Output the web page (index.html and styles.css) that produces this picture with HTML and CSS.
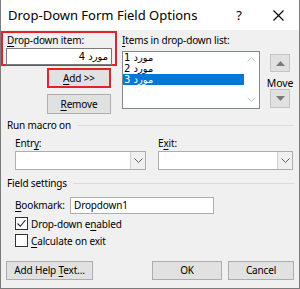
FILE: index.html
```html
<!DOCTYPE html>
<html lang="en">
<head>
    <meta charset="UTF-8">
    <title>Drop-Down Form Field Options</title>
    <link rel="stylesheet" href="styles.css">
</head>
<body>
    <div class="dialog">
        <div class="titlebar">
            <span class="title">Drop-Down Form Field Options</span>
            <span class="help">?</span>
            <span class="close">
                <svg width="11" height="11" viewBox="0 0 11 11"><path d="M0.5 0.5 L10.5 10.5 M10.5 0.5 L0.5 10.5" stroke="#000" stroke-width="1.1" fill="none"/></svg>
            </span>
        </div>

        <div class="content">
            <div class="top">
                <div class="col-item">
                    <div class="item-box">
                        <div class="label"><u>D</u>rop-down item:</div>
                        <div class="textbox item-input"><span class="arabic" dir="rtl">مورد 4</span></div>
                    </div>
                    <button class="btn btn-side marked"><u>A</u>dd &gt;&gt;</button>
                    <button class="btn btn-side btn-remove"><u>R</u>emove</button>
                </div>

                <div class="col-list">
                    <div class="label"><u>I</u>tems in drop-down list:</div>
                    <div class="listbox">
                        <div class="list-rows">
                            <div class="list-row"><span class="arabic" dir="rtl">مورد 1</span></div>
                            <div class="list-row"><span class="arabic" dir="rtl">مورد 2</span></div>
                            <div class="list-row selected"><span class="arabic" dir="rtl">مورد 3</span></div>
                        </div>
                        <div class="scrollbar">
                            <svg width="9" height="5" viewBox="0 0 9 5"><path d="M0.5 4.5 L4.5 0.5 L8.5 4.5" stroke="#c4c4c4" fill="none"/></svg>
                            <svg width="9" height="5" viewBox="0 0 9 5"><path d="M0.5 0.5 L4.5 4.5 L8.5 0.5" stroke="#c4c4c4" fill="none"/></svg>
                        </div>
                    </div>
                </div>

                <div class="col-move">
                    <div class="move-btn">
                        <svg width="9" height="5" viewBox="0 0 9 5"><path d="M0 5 L4.5 0 L9 5 Z" fill="#7a7a7a"/></svg>
                    </div>
                    <div class="move-label">Move</div>
                    <div class="move-btn move-down">
                        <svg width="9" height="5" viewBox="0 0 9 5"><path d="M0 0 L4.5 5 L9 0 Z" fill="#7a7a7a"/></svg>
                    </div>
                </div>
            </div>

            <div class="group-head">
                <span>Run macro on</span>
                <span class="rule"></span>
            </div>
            <div class="macro-row">
                <div class="macro-col">
                    <div class="label">Entr<u>y</u>:</div>
                    <div class="combo">
                        <span class="combo-text"></span>
                        <span class="combo-btn">
                            <svg width="9" height="5" viewBox="0 0 9 5"><path d="M0.5 0.5 L4.5 4.5 L8.5 0.5" stroke="#606060" fill="none"/></svg>
                        </span>
                    </div>
                </div>
                <div class="macro-col">
                    <div class="label">E<u>x</u>it:</div>
                    <div class="combo">
                        <span class="combo-text"></span>
                        <span class="combo-btn">
                            <svg width="9" height="5" viewBox="0 0 9 5"><path d="M0.5 0.5 L4.5 4.5 L8.5 0.5" stroke="#606060" fill="none"/></svg>
                        </span>
                    </div>
                </div>
            </div>

            <div class="group-head group-fields">
                <span>Field settings</span>
                <span class="rule"></span>
            </div>
            <div class="bookmark-row">
                <span class="bookmark-label"><u>B</u>ookmark:</span>
                <div class="textbox bookmark-input">Dropdown1</div>
            </div>
            <div class="check-row">
                <span class="checkbox">
                    <svg width="11" height="11" viewBox="0 0 11 11"><path d="M1.5 5.5 L4.3 8.3 L9.5 2" stroke="#222" stroke-width="1.1" fill="none"/></svg>
                </span>
                <span>Drop-down e<u>n</u>abled</span>
            </div>
            <div class="check-row check-second">
                <span class="checkbox"></span>
                <span><u>C</u>alculate on exit</span>
            </div>

            <div class="footer">
                <button class="btn btn-help">Add Help <u>T</u>ext...</button>
                <span class="spacer"></span>
                <button class="btn btn-ok">OK</button>
                <button class="btn btn-cancel">Cancel</button>
            </div>
        </div>
    </div>
</body>
</html>
```

FILE: styles.css
```css
* {
    box-sizing: border-box;
}
body {
    margin: 0;
    font-family: "Noto Sans", "DejaVu Sans", sans-serif;
    font-size: 10px;
    letter-spacing: -0.15px;
    color: #000;
    background: #fff;
}
u {
    text-decoration-thickness: 1px;
    text-underline-offset: 2px;
}
.arabic {
    font-family: "DejaVu Sans", sans-serif;
    font-size: 10px;
    letter-spacing: 0;
}
.dialog {
    width: 300px;
    height: 289px;
    border: 1px solid #7a7a7a;
    border-top: none;
    background: #f0f0f0;
    display: flex;
    flex-direction: column;
}
.titlebar {
    height: 30px;
    flex-shrink: 0;
    background: #fff;
    display: flex;
    align-items: center;
    padding-left: 7px;
    letter-spacing: 0;
}
.title {
    flex: 1;
    font-size: 13px;
}
.help {
    width: 20px;
    text-align: center;
    font-size: 13px;
    margin-right: 9px;
}
.close {
    width: 41px;
    display: flex;
    justify-content: center;
}
.content {
    flex: 1;
    display: flex;
    flex-direction: column;
    padding: 0 5px 8px 6px;
}
.label {
    height: 14px;
    line-height: 14px;
    white-space: nowrap;
}

/* top part: item box, list, move buttons */
.top {
    display: flex;
    margin-left: -6px;
    margin-top: 1px;
}
.col-item {
    width: 116px;
    display: flex;
    flex-direction: column;
}
.item-box {
    border: 2px solid #e5222b;
    padding: 0 3px 0 4px;
    height: 35px;
}
.textbox {
    background: #fff;
    border: 1px solid #7a7a7a;
    height: 17px;
    line-height: 15px;
    padding: 0 3px;
    white-space: nowrap;
}
.item-input {
    margin: 1px 0 0 -1px;
    text-align: right;
}
.btn {
    font-family: inherit;
    font-size: inherit;
    letter-spacing: inherit;
    color: #000;
    background: #e1e1e1;
    border: 1px solid #adadad;
    padding: 0;
    height: 20px;
    line-height: 18px;
}
.btn-side {
    width: 64px;
    margin-left: 46px;
    margin-top: 2px;
}
.btn-remove {
    margin-top: 6px;
}
.marked {
    border: 2px solid #e5222b;
    line-height: 16px;
}

.col-list {
    width: 138px;
    margin-left: 5px;
    padding-top: 2px;
}
.listbox {
    margin-top: 4px;
    height: 58px;
    background: #fff;
    border: 1px solid #828790;
    display: flex;
}
.list-rows {
    flex: 1;
}
.list-row {
    height: 11px;
    line-height: 11px;
    padding-left: 1px;
    overflow: hidden;
}
.list-row.selected {
    background: #0078d7;
    color: #fff;
}
.scrollbar {
    width: 15px;
    display: flex;
    flex-direction: column;
    justify-content: space-between;
    align-items: center;
    padding: 5px 0 6px;
}

.col-move {
    width: 26px;
    margin-left: 7px;
    display: flex;
    flex-direction: column;
    align-items: center;
    padding-top: 23px;
}
.move-btn {
    width: 20px;
    height: 18px;
    background: #e1e1e1;
    border: 1px solid #c4c4c4;
    display: flex;
    align-items: center;
    justify-content: center;
}
.move-label {
    margin-top: 4px;
    line-height: 14px;
    font-size: 10.5px;
}
.move-down {
    margin-top: -1px;
    height: 19px;
}

/* groups */
.group-head {
    display: flex;
    align-items: center;
    height: 14px;
    margin-top: 4px;
}
.group-head .rule {
    flex: 1;
    height: 1px;
    background: #dcdcdc;
    margin-left: 6px;
}
.macro-row {
    display: grid;
    grid-template-columns: 131px 135px;
    gap: 12px;
    padding-left: 8px;
    margin-top: 4px;
}
.combo {
    margin-top: 1px;
    height: 19px;
    background: #fff;
    border: 1px solid #adadad;
    display: flex;
}
.combo-text {
    flex: 1;
}
.combo-btn {
    width: 15px;
    background: #f0f0f0;
    border-left: 1px solid #d0d0d0;
    display: flex;
    align-items: center;
    justify-content: center;
}
.group-fields {
    margin-top: 6px;
}
.bookmark-row {
    display: flex;
    align-items: center;
    height: 16px;
    padding-left: 8px;
    margin-top: 7px;
}
.bookmark-label {
    width: 55px;
    flex-shrink: 0;
    white-space: nowrap;
}
.bookmark-input {
    width: 144px;
    height: 17px;
    border-color: #adadad;
}
.check-row {
    display: flex;
    align-items: center;
    gap: 3px;
    padding-left: 8px;
    margin-top: 3px;
    height: 15px;
}
.check-second {
    margin-top: 2px;
}
.checkbox {
    width: 13px;
    height: 13px;
    background: #fff;
    border: 1px solid #333;
    display: flex;
    align-items: center;
    justify-content: center;
}

.footer {
    margin-top: auto;
    display: flex;
    margin-left: -1px;
}
.spacer {
    flex: 1;
}
.footer .btn {
    height: 19px;
    line-height: 17px;
}
.btn-help {
    width: 87px;
}
.btn-ok {
    width: 70px;
}
.btn-cancel {
    width: 66px;
    margin-left: 6px;
}
```
